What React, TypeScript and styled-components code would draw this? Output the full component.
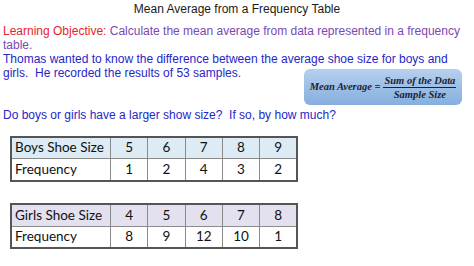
import { Component, ReactNode } from "react";
import styled, { createGlobalStyle } from "styled-components";

const GlobalStyle = createGlobalStyle`
  html, body {
    margin: 0;
    padding: 0;
    background: #ffffff;
  }
  body {
    font-family: "Liberation Sans", Arial, sans-serif;
  }
`;

const Slide = styled.div`
  width: 474px;
  height: 266px;
  background: #ffffff;
  overflow: hidden;
  display: flex;
  flex-direction: column;
  align-items: flex-start;
`;

const Title = styled.h1`
  align-self: stretch;
  margin: 2px 0 0 0;
  font-size: 12px;
  line-height: 14px;
  font-weight: normal;
  color: #1a1a1a;
  text-align: center;
`;

const Body = styled.div`
  align-self: stretch;
  margin-top: 8px;
  padding-left: 3px;
  font-size: 12px;
  line-height: 14px;
`;

const Line = styled.div<{ $color?: string }>`
  color: ${(p) => p.$color || "#2626c8"};
  white-space: nowrap;
`;

const Red = styled.span`
  color: #e5232b;
`;

const Row = styled.div`
  display: flex;
  align-items: flex-start;
  justify-content: space-between;
  padding-right: 12px;
`;

const FormulaBox = styled.div`
  margin-top: 3px;
  width: 158px;
  height: 36px;
  box-sizing: border-box;
  border-radius: 6px;
  background: linear-gradient(180deg, #b7d0ee 0%, #9dbfe6 50%, #86aedd 100%);
  display: flex;
  align-items: center;
  justify-content: center;
  gap: 3px;
  white-space: nowrap;
  font-family: "Liberation Serif", "DejaVu Serif", serif;
  font-style: italic;
  font-weight: bold;
  font-size: 10.5px;
  color: #1b2235;
`;

const Fraction = styled.div`
  display: flex;
  flex-direction: column;
  align-items: center;
  line-height: 11px;
`;

const Numerator = styled.span`
  border-bottom: 1px solid #1b2235;
  padding: 0 1px 1px;
`;

const Denominator = styled.span`
  padding-top: 1px;
`;

const Question = styled(Line)`
  margin-top: 3px;
`;

const Table = styled.table<{ $top: number }>`
  margin: ${(p) => p.$top}px 0 0 10px;
  width: 288px;
  border-collapse: collapse;
  table-layout: fixed;
  border: 2px solid #555555;
  font-family: Lato, "Open Sans", sans-serif;
  font-size: 13.5px;
  color: #111111;
`;

const Cell = styled.td<{ $bg?: string; $h: number }>`
  border: 1px solid #8a8a8a;
  background: ${(p) => p.$bg || "#ffffff"};
  height: ${(p) => p.$h}px;
  padding: 0;
  text-align: center;
  line-height: 1;
`;

const LabelCell = styled(Cell)`
  width: 95px;
  text-align: left;
  padding-left: 3px;
  white-space: nowrap;
`;

interface FreqTableProps {
  top: number;
  label: string;
  sizes: number[];
  freqs: number[];
  headBg: string;
  headH: number;
  freqH: number;
}

class FreqTable extends Component<FreqTableProps> {
  render(): ReactNode {
    const { top, label, sizes, freqs, headBg, headH, freqH } = this.props;
    return (
      <Table $top={top}>
        <tbody>
          <tr>
            <LabelCell $bg={headBg} $h={headH}>{label}</LabelCell>
            {sizes.map((s, i) => (
              <Cell key={i} $bg={headBg} $h={headH}>{s}</Cell>
            ))}
          </tr>
          <tr>
            <LabelCell $h={freqH}>Frequency</LabelCell>
            {freqs.map((f, i) => (
              <Cell key={i} $h={freqH}>{f}</Cell>
            ))}
          </tr>
        </tbody>
      </Table>
    );
  }
}

export default class App extends Component {
  render(): ReactNode {
    return (
      <Slide>
        <GlobalStyle />
        <Title>Mean Average from a Frequency Table</Title>
        <Body>
          <Line $color="#7b47b3">
            <Red>Learning Objective: </Red>Calculate the mean average from data represented in a frequency
          </Line>
          <Line $color="#7b47b3">table.</Line>
          <Line>Thomas wanted to know the difference between the average shoe size for boys and</Line>
          <Row>
            <Line>girls.&nbsp; He recorded the results of 53 samples.</Line>
            <FormulaBox>
              <span>Mean Average =</span>
              <Fraction>
                <Numerator>Sum of the Data</Numerator>
                <Denominator>Sample Size</Denominator>
              </Fraction>
            </FormulaBox>
          </Row>
          <Question>Do boys or girls have a larger show size?&nbsp; If so, by how much?</Question>
        </Body>
        <FreqTable
          top={14}
          label="Boys Shoe Size"
          sizes={[5, 6, 7, 8, 9]}
          freqs={[1, 2, 4, 3, 2]}
          headBg="#dcebf4"
          headH={20}
          freqH={21}
        />
        <FreqTable
          top={21}
          label="Girls Shoe Size"
          sizes={[4, 5, 6, 7, 8]}
          freqs={[8, 9, 12, 10, 1]}
          headBg="#e3e0ef"
          headH={21}
          freqH={20}
        />
      </Slide>
    );
  }
}
